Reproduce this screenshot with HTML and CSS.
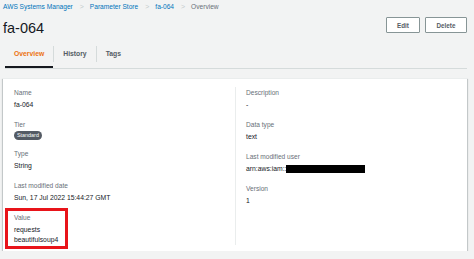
FILE: index.html
```html
<!DOCTYPE html>
<html>
<head>
<meta charset="utf-8">
<link rel="stylesheet" href="styles.css">
</head>
<body>
<div class="page">
  <nav class="crumbs">
    <a class="crumb link">AWS Systems Manager</a>
    <span class="sep">&gt;</span>
    <a class="crumb link">Parameter Store</a>
    <span class="sep">&gt;</span>
    <a class="crumb link">fa-064</a>
    <span class="sep">&gt;</span>
    <span class="crumb current">Overview</span>
  </nav>
  <div class="head">
    <h1 class="title">fa-064</h1>
    <div class="actions">
      <button class="btn btn-edit">Edit</button>
      <button class="btn btn-delete">Delete</button>
    </div>
  </div>
  <div class="tabs">
    <div class="tab active">Overview</div>
    <div class="tab">History</div>
    <div class="tab">Tags</div>
  </div>
  <section class="card">
    <div class="col">
      <div class="field"><div class="label">Name</div><div class="value">fa-064</div></div>
      <div class="field"><div class="label">Tier</div><div class="value"><span class="badge">Standard</span></div></div>
      <div class="field"><div class="label">Type</div><div class="value">String</div></div>
      <div class="field"><div class="label">Last modified date</div><div class="value">Sun, 17 Jul 2022 15:44:27 GMT</div></div>
      <div class="field highlight"><div class="label">Value</div><div class="value multi">requests<br>beautifulsoup4</div></div>
    </div>
    <div class="col col-right">
      <div class="field"><div class="label">Description</div><div class="value">-</div></div>
      <div class="field"><div class="label">Data type</div><div class="value">text</div></div>
      <div class="field"><div class="label">Last modified user</div><div class="value">arn:aws:iam::<span class="redact"></span></div></div>
      <div class="field"><div class="label">Version</div><div class="value">1</div></div>
    </div>
  </section>
</div>
</body>
</html>
```
FILE: styles.css
```css
html, body {
  margin: 0;
  padding: 0;
  background: #f2f3f3;
  font-family: "Liberation Sans", Arial, sans-serif;
  color: #16191f;
}
.page {
  padding: 0 7px 0 3px;
}
.crumbs {
  height: 14px;
  line-height: 14px;
  font-size: 6.6px;
  display: flex;
  align-items: center;
  white-space: nowrap;
}
.crumb.link {
  color: #0073bb;
}
.crumb.current {
  color: #687078;
}
.sep {
  color: #c3cbcc;
  margin: 0 6px 0 7px;
  font-size: 7px;
}
.head {
  display: flex;
  justify-content: space-between;
  align-items: flex-start;
}
.title {
  margin: 0;
  font-size: 14.5px;
  font-weight: normal;
  line-height: 28px;
  color: #16191f;
}
.actions {
  display: flex;
  gap: 5px;
  margin-top: 3px;
}
.btn {
  height: 16px;
  padding: 0;
  border: 1px solid #879596;
  border-radius: 1px;
  background: #ffffff;
  color: #545b64;
  font-family: inherit;
  font-weight: bold;
  font-size: 6.3px;
}
.btn-edit { width: 34px; }
.btn-delete { width: 42px; }
.tabs {
  display: flex;
  height: 26px;
  margin-left: 2px;
  border-bottom: 1px solid #d5dbdb;
}
.tab {
  position: relative;
  padding: 0 9px;
  line-height: 24px;
  font-size: 6.8px;
  font-weight: bold;
  color: #545b64;
}
.tab + .tab {
  border-left: 1px solid transparent;
}
.tab + .tab::before {
  content: "";
  position: absolute;
  left: -1px;
  top: 4px;
  height: 16px;
  border-left: 1px solid #d5dbdb;
}
.tab.active {
  color: #ec7211;
  border-bottom: 2px solid #16191f;
}
.card {
  margin-top: 9px;
  background: #ffffff;
  display: grid;
  grid-template-columns: 221px 1fr;
  padding: 8px 11px 6px 11px;
  box-shadow: 0 1px 1px 0 rgba(0, 28, 36, 0.3), 1px 1px 1px 0 rgba(0, 28, 36, 0.15), -1px 1px 1px 0 rgba(0, 28, 36, 0.15);
  border-top: 1px solid #eaeded;
}
.col-right {
  border-left: 1px solid #eaeded;
  padding-left: 10px;
}
.field {
  margin-bottom: 8px;
}
.field:last-child {
  margin-bottom: 0;
}
.label {
  font-size: 6.6px;
  line-height: 12px;
  color: #687078;
}
.value {
  font-size: 6.8px;
  line-height: 12px;
  color: #16191f;
  display: flex;
  align-items: center;
  white-space: nowrap;
}
.value.multi {
  display: block;
  line-height: 10px;
  padding-top: 1px;
}
.badge {
  display: inline-block;
  background: #545b64;
  color: #ffffff;
  font-size: 5.4px;
  line-height: 9px;
  height: 9px;
  padding: 0 3px;
  border-radius: 5px;
}
.redact {
  display: inline-block;
  width: 79px;
  height: 8px;
  background: #000000;
}
.highlight {
  position: relative;
}
.highlight::after {
  content: "";
  position: absolute;
  left: -9px;
  top: -4px;
  width: 57px;
  height: 35px;
  border: 3px solid #e8141a;
}
```
